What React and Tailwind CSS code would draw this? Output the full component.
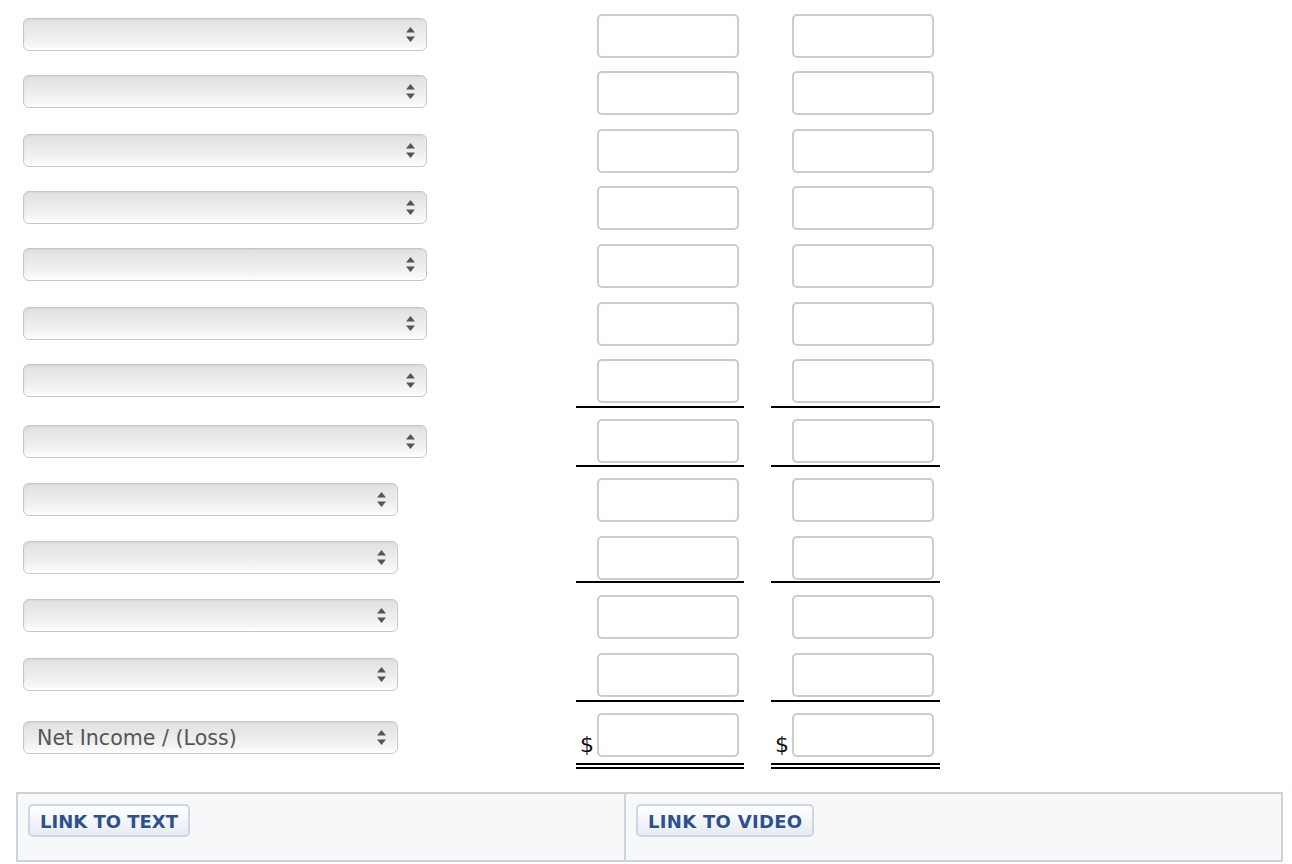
import React from "react";

const rows = [
  { pt: "pt-[14px]", pb: "pb-[2px]", line: "", sel: "mt-[4px]", wide: true },
  { pt: "pt-[11px]", pb: "pb-[3px]", line: "", sel: "mt-[4px]", wide: true },
  { pt: "pt-[11px]", pb: "pb-[2px]", line: "", sel: "mt-[5px]", wide: true },
  { pt: "pt-[11px]", pb: "pb-[3px]", line: "", sel: "mt-[5px]", wide: true },
  { pt: "pt-[11px]", pb: "pb-[3px]", line: "", sel: "mt-[4px]", wide: true },
  { pt: "pt-[11px]", pb: "pb-[2px]", line: "", sel: "mt-[5px]", wide: true },
  { pt: "pt-[11px]", pb: "pb-[3px]", line: "border-b-2 border-black", sel: "mt-[5px]", wide: true },
  { pt: "pt-[11px]", pb: "pb-[2px]", line: "border-b-2 border-black", sel: "mt-[6px]", wide: true },
  { pt: "pt-[11px]", pb: "pb-[3px]", line: "", sel: "mt-[5px]", wide: false },
  { pt: "pt-[11px]", pb: "pb-[1px]", line: "border-b-2 border-black", sel: "mt-[5px]", wide: false },
  { pt: "pt-[12px]", pb: "pb-[3px]", line: "", sel: "mt-[4px]", wide: false },
  { pt: "pt-[11px]", pb: "pb-[3px]", line: "border-b-2 border-black", sel: "mt-[5px]", wide: false },
  { pt: "pt-[11px]", pb: "pb-[6px]", line: "border-b-[6px] border-double border-black", sel: "mt-[8px]", wide: false, label: "Net Income / (Loss)", dollar: true },
];

function Arrows() {
  return (
    <svg width="9" height="15" viewBox="0 0 9 15" className="shrink-0">
      <polygon points="0,5.5 4.5,0 9,5.5" fill="#555555" />
      <polygon points="0,9.5 9,9.5 4.5,15" fill="#555555" />
    </svg>
  );
}

function Select({ wide, label, mt }) {
  return (
    <div
      className={`${mt} ${wide ? "w-[404px]" : "w-[375px]"} h-[33px] flex items-center justify-between pl-[13px] pr-[11px] rounded-[6px] border-[1.5px] border-[#c7c7c7] bg-linear-to-b from-[#e1e1e1] via-[#ececec] to-[#fbfbfb] shadow-[inset_0_-2px_2px_rgba(255,255,255,0.95),inset_1px_1px_2px_rgba(0,0,0,0.06)]`}
    >
      <span className="pt-[2px] text-[20.6px] leading-none text-[#555555] font-['DejaVu_Sans',Verdana,sans-serif] whitespace-nowrap">
        {label || ""}
      </span>
      <Arrows />
    </div>
  );
}

function Cell({ pb, line, dollar, width }) {
  return (
    <div className={`${width} ${pb} ${line} flex items-end`}>
      <div className="w-[21px] h-[44px] flex items-end justify-end pr-[3px] pb-[1px]">
        {dollar && (
          <span className="text-[22px] leading-none text-[#111111] font-['DejaVu_Sans',Verdana,sans-serif]">
            $
          </span>
        )}
      </div>
      <div className="w-[142px] h-[44px] bg-white border-2 border-[#cccccc] rounded-[5px]" />
    </div>
  );
}

function LinkButton({ children, tracking }) {
  return (
    <div className={`inline-flex h-[33px] items-center pt-[2px] px-[10px] rounded-[5px] border-2 border-[#cdd6e2] bg-linear-to-b from-white to-[#e7ecf2] text-[18px] leading-none font-bold text-[#2c5090] font-['DejaVu_Sans',Verdana,sans-serif] whitespace-nowrap ${tracking}`}>
      {children}
    </div>
  );
}

export default function App() {
  return (
    <div className="w-[1292px] min-h-[864px] bg-white">
      <div className="flex flex-col">
        {rows.map((r, i) => (
          <div key={i} className={`flex items-start pl-[23px] ${r.pt}`}>
            <div className="w-[553px]">
              <Select wide={r.wide} label={r.label} mt={r.sel} />
            </div>
            <Cell pb={r.pb} line={r.line} dollar={r.dollar} width="w-[168px]" />
            <div className="w-[27px]" />
            <Cell pb={r.pb} line={r.line} dollar={r.dollar} width="w-[169px]" />
          </div>
        ))}
      </div>
      <div className="ml-[16px] mt-[23px] w-[1267px] h-[70px] border-2 border-[#cbd2dc] bg-[#f7f8fa] flex">
        <div className="w-[608px] border-r-2 border-[#cbd2dc] pl-[10px] pt-[10px]">
          <LinkButton tracking="tracking-normal">LINK TO TEXT</LinkButton>
        </div>
        <div className="flex-1 pl-[10px] pt-[10px]">
          <LinkButton tracking="tracking-[0.3px]">LINK TO VIDEO</LinkButton>
        </div>
      </div>
    </div>
  );
}
